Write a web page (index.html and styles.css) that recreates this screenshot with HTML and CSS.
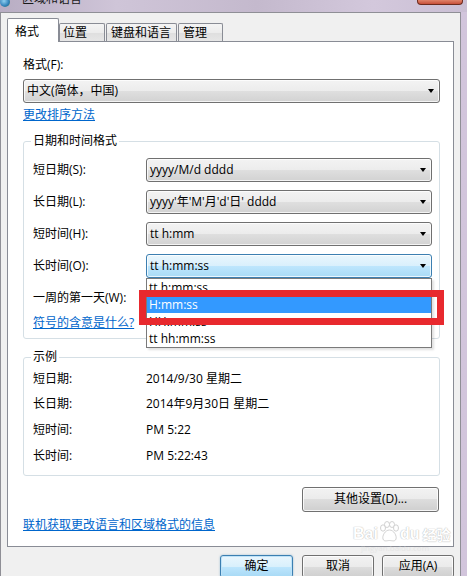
FILE: index.html
```html
<!DOCTYPE html>
<html lang="zh-CN">
<head>
    <meta charset="UTF-8">
    <meta name="viewport" content="width=device-width, initial-scale=1.0">
    <title>区域和语言</title>
    <link rel="stylesheet" href="styles.css">
</head>
<body>
    <div class="titlebar">
        <span class="app-icon"></span>
        <span class="title">区域和语言</span>
        <span class="close-btn"></span>
    </div>

    <div class="client">
        <div class="tabs">
            <div class="tab tab-format active">格式</div>
            <div class="tab tab-location">位置</div>
            <div class="tab tab-keyboard">键盘和语言</div>
            <div class="tab tab-admin">管理</div>
        </div>

        <div class="panel">
            <div class="field-label">格式(F):</div>
            <div class="combo">
                <span>中文(简体，中国)</span>
                <span class="arrow"></span>
            </div>
            <a href="#" class="link link-first">更改排序方法</a>

            <fieldset class="group group-formats">
                <legend>日期和时间格式</legend>
                <div class="rows">
                    <div class="row">
                        <span class="row-label">短日期(S):</span>
                        <div class="combo"><span>yyyy/M/d dddd</span><span class="arrow"></span></div>
                    </div>
                    <div class="row">
                        <span class="row-label">长日期(L):</span>
                        <div class="combo"><span>yyyy'年'M'月'd'日' dddd</span><span class="arrow"></span></div>
                    </div>
                    <div class="row">
                        <span class="row-label">短时间(H):</span>
                        <div class="combo"><span>tt h:mm</span><span class="arrow"></span></div>
                    </div>
                    <div class="row">
                        <span class="row-label">长时间(O):</span>
                        <div class="combo focused">
                            <span>tt h:mm:ss</span>
                            <span class="arrow"></span>
                            <ul class="droplist">
                                <li>tt h:mm:ss</li>
                                <li class="selected">H:mm:ss</li>
                                <li>HH:mm:ss</li>
                                <li>tt hh:mm:ss</li>
                                <li class="callout"></li>
                            </ul>
                        </div>
                    </div>
                    <div class="row">
                        <span class="row-label">一周的第一天(W):</span>
                        <div class="combo"><span>星期一</span><span class="arrow"></span></div>
                    </div>
                </div>
                <a href="#" class="link link-symbols">符号的含意是什么?</a>
            </fieldset>

            <fieldset class="group group-samples">
                <legend>示例</legend>
                <div class="sample-row"><span class="row-label">短日期:</span><span>2014/9/30 星期二</span></div>
                <div class="sample-row"><span class="row-label">长日期:</span><span>2014年9月30日 星期二</span></div>
                <div class="sample-row"><span class="row-label">短时间:</span><span>PM 5:22</span></div>
                <div class="sample-row"><span class="row-label">长时间:</span><span>PM 5:22:43</span></div>
            </fieldset>

            <div class="more-row">
                <button class="btn btn-more">其他设置(D)...</button>
            </div>
            <a href="#" class="link link-online">联机获取更改语言和区域格式的信息</a>
        </div>

        <div class="dialog-buttons">
            <button class="btn btn-default">确定</button>
            <button class="btn btn-cancel">取消</button>
            <button class="btn btn-apply">应用(A)</button>
        </div>
    </div>

    <div class="watermark">
        <span class="wm-word">Bai</span>
        <svg class="wm-paw" width="22" height="22" viewBox="0 0 22 22">
            <ellipse cx="5" cy="7" rx="2.5" ry="3.2"/>
            <ellipse cx="9" cy="3.5" rx="2.5" ry="3"/>
            <ellipse cx="14" cy="3.5" rx="2.5" ry="3"/>
            <ellipse cx="18" cy="7" rx="2.5" ry="3.2"/>
            <path d="M11.5 9 C7 9 4 15 5 18 C6 21 9 19.5 11.5 19.5 C14 19.5 17 21 18 18 C19 15 16 9 11.5 9 Z"/>
        </svg>
        <span class="wm-word">du</span>
        <span class="wm-word wm-cn">经验</span>
        <div class="wm-url">jingyan.baidu.com</div>
    </div>
</body>
</html>
```

FILE: styles.css
```css
* {
    margin: 0;
    padding: 0;
    box-sizing: border-box;
}

body {
    width: 467px;
    height: 576px;
    overflow: hidden;
    position: relative;
    background: linear-gradient(90deg, #c3b7ce 0%, #d2c5dc 100%);
    font-family: "Open Sans", "Noto Sans CJK SC", sans-serif;
    font-size: 12px;
    line-height: 16px;
    color: #000;
}

/* window chrome */
.titlebar {
    height: 12px;
    display: flex;
    align-items: flex-end;
    overflow: hidden;
    padding-bottom: 5px;
    background: linear-gradient(90deg, #b8adc3 0%, #cfc5d8 25%, #c4b9cd 55%, #d3c8dc 80%, #cabfd4 100%);
}

.app-icon {
    width: 10px;
    height: 10px;
    margin-right: 12px;
    border-radius: 50%;
    background: radial-gradient(circle at 40% 40%, #8fd0f0, #2f7fb8 60%, #3a8a3a);
}

.title {
    color: #1a1a1a;
}

.close-btn {
    align-self: flex-start;
    margin-left: auto;
    margin-right: 4px;
    width: 46px;
    height: 5px;
    border: 1px solid #6e2b1e;
    border-top: none;
    border-radius: 0 0 4px 4px;
    background: linear-gradient(#e0836a, #c7503a);
}

.client {
    width: 461px;
    height: 564px;
    background: #f0f0f0;
    border: 1px solid #8f8f96;
    border-bottom: none;
    padding: 6px 6px 0 6px;
}

/* tabs */
.tabs {
    display: flex;
    align-items: flex-end;
    height: 22px;
    position: relative;
    z-index: 1;
}

.tab {
    height: 18px;
    padding: 1px 0 0 4px;
    border: 1px solid #898c95;
    border-bottom: none;
    border-radius: 2px 2px 0 0;
    background: linear-gradient(#f4f4f4, #ececec 50%, #dedede 50%, #e6e6e6);
    white-space: nowrap;
}

.tab.active {
    height: 24px;
    margin-bottom: -1px;
    padding: 5px 0 0 7px;
    background: #fff;
}

.tab-format { width: 52px; }
.tab-location { width: 46px; padding-left: 3px; }
.tab-keyboard { width: 71px; margin-left: 1px; }
.tab-admin { width: 45px; margin-left: 1px; }

/* tab page */
.panel {
    width: 447px;
    background: #fff;
    border: 1px solid #898c95;
    padding: 15px 13px 13px 15px;
}

.field-label {
    margin-bottom: 6px;
}

.link {
    display: block;
    width: max-content;
    color: #0066cc;
    text-decoration: underline;
}

.link-first {
    margin-top: 4px;
}

/* combo boxes */
.combo {
    position: relative;
    display: flex;
    align-items: center;
    justify-content: space-between;
    height: 24px;
    padding-left: 3px;
    border: 1px solid #707070;
    border-radius: 3px;
    background: linear-gradient(#f3f3f3, #ececec 50%, #dfdfdf 50%, #d2d2d2);
    box-shadow: inset 0 0 0 1px rgba(255, 255, 255, 0.75);
    white-space: nowrap;
}

.combo.focused {
    border-color: #3c7fb1;
    background: linear-gradient(#eaf6fd, #d9f0fc 50%, #bee6fd 50%, #a9dbf6);
}

.arrow {
    width: 0;
    height: 0;
    margin-right: 5px;
    border-left: 3.5px solid transparent;
    border-right: 3.5px solid transparent;
    border-top: 4px solid #000;
}

/* group boxes */
.group {
    margin-top: 10px;
    border: 1px solid #d5dfe5;
    border-radius: 3px;
    padding: 9px 7px 7px 9px;
}

.group legend {
    padding: 0 2px;
    margin-left: -2px;
    line-height: 16px;
}

.rows {
    display: flex;
    flex-direction: column;
    gap: 8px;
}

.row {
    display: flex;
    align-items: center;
}

.row-label {
    width: 113px;
    flex-shrink: 0;
}

.row .combo {
    width: 286px;
}

.link-symbols {
    margin-top: 5px;
}

.group-samples {
    padding-top: 1px;
    padding-bottom: 6px;
}

.sample-row {
    display: flex;
    align-items: center;
    height: 25.67px;
}

/* open drop-down list */
.droplist {
    position: absolute;
    top: calc(100% + 1px);
    left: -1px;
    width: calc(100% + 2px);
    z-index: 5;
    list-style: none;
    background: #fff;
    border: 1px solid #7a7a7a;
    box-shadow: 2px 2px 2px rgba(0, 0, 0, 0.12);
}

.droplist li {
    height: 17px;
    line-height: 17px;
    padding-left: 2px;
}

.droplist li.selected {
    background: #3399ff;
    color: #fff;
}

.droplist .callout {
    position: absolute;
    left: -8px;
    top: 11px;
    width: 305px;
    height: 35px;
    padding: 0;
    border: 7px solid #e8292e;
}

/* buttons */
.btn {
    height: 23px;
    font: inherit;
    color: #000;
    border: 1px solid #707070;
    border-radius: 3px;
    background: linear-gradient(#f2f2f2, #ebebeb 50%, #dddddd 50%, #cfcfcf);
    box-shadow: inset 0 0 0 1px rgba(255, 255, 255, 0.8);
}

.more-row {
    display: flex;
    justify-content: flex-end;
    margin-top: 11px;
    padding-right: 1px;
}

.btn-more {
    width: 137px;
    height: 25px;
}

.link-online {
    margin-top: 5px;
}

.dialog-buttons {
    display: flex;
    justify-content: flex-end;
    margin-top: 8px;
}

.btn-default {
    width: 73px;
    border-color: #3c7fb1;
    background: linear-gradient(#eaf6fd, #d9f0fc 50%, #bee6fd 50%, #a7d9f5);
    box-shadow: inset 0 0 0 1px #bfe3f8, 0 0 2px rgba(60, 127, 177, 0.5);
}

.btn-cancel {
    width: 72px;
    margin-left: 9px;
}

.btn-apply {
    width: 72px;
    margin-left: 8px;
}

/* Baidu watermark */
.watermark {
    position: absolute;
    left: 353px;
    top: 521px;
    display: flex;
    flex-wrap: wrap;
    align-items: flex-end;
    width: 100px;
    opacity: 0.55;
}

.wm-word {
    font-family: "Liberation Sans", sans-serif;
    font-size: 16px;
    font-weight: bold;
    line-height: 18px;
    color: #fff;
    text-shadow: 0 0 1px #888, 0 0 1px #888;
}

.wm-cn {
    font-family: "Noto Sans CJK SC", sans-serif;
    font-size: 14px;
    margin-left: 3px;
}

.wm-paw {
    fill: #fff;
    stroke: #999;
    stroke-width: 0.8;
}

.wm-url {
    width: 100%;
    font-size: 8px;
    line-height: 10px;
    color: #ddd;
    padding-left: 8px;
}
```
